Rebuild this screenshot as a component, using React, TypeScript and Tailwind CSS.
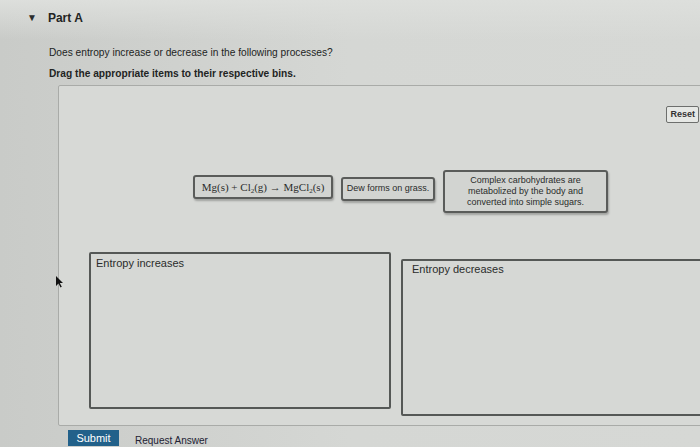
import React from "react";

// Part A — sorting exercise: drag processes into "entropy increases / decreases" bins.

type Item = { key: string; content: React.ReactNode; className: string };

const ITEMS: Item[] = [
  {
    key: "mg",
    className: "w-[140px] h-[24px] mt-[5px] font-['Liberation_Serif',serif] text-[11px]",
    content: (
      <span>
        Mg(s) + Cl<sub className="text-[7px]">2</sub>(g) → MgCl<sub className="text-[7px]">2</sub>(s)
      </span>
    ),
  },
  {
    key: "dew",
    className: "w-[94px] h-[24px] mt-[7px] text-[9px]",
    content: <span>Dew forms on grass.</span>,
  },
  {
    key: "carbs",
    className: "w-[165px] h-[43px] text-[9px] leading-[11px]",
    content: (
      <span>
        Complex carbohydrates are
        <br />
        metabolized by the body and
        <br />
        converted into simple sugars.
      </span>
    ),
  },
];

function Bin({ label, className }: { label: string; className?: string }) {
  return (
    <div
      className={
        "h-[157px] border-2 border-[#555856] bg-[#d6d8d5] rounded-[2px] px-[5px] pt-[1px] " +
        (className ?? "")
      }
    >
      <span className="block text-[11px] leading-[12px] text-[#2a2c2b]">{label}</span>
    </div>
  );
}

export default function App() {
  return (
    <div className="relative w-[700px] h-[447px] overflow-hidden bg-gradient-to-r from-[#c9cbc8] via-[#d5d7d4] to-[#d6d8d5] font-['Liberation_Sans',Arial,sans-serif] text-[#222423]">
      {/* lighter band behind the header */}
      <div className="absolute inset-x-0 top-0 h-[40px] bg-gradient-to-b from-[#dddfdc] to-transparent" />

      <div className="relative">
        <div className="flex items-center pt-[8px] pl-[27px] h-[28px]">
          <span className="text-[10px] leading-none text-[#2b2d2c]">▼</span>
          <span className="ml-[11px] text-[12px] font-bold">Part A</span>
        </div>

        <div className="pl-[49px] pt-[18px]">
          <p className="text-[10.2px] leading-[14px]">
            Does entropy increase or decrease in the following processes?
          </p>
          <p className="mt-[7px] text-[10.2px] leading-[14px] font-bold">
            Drag the appropriate items to their respective bins.
          </p>
        </div>

        <div className="ml-[58px] mt-[4px] w-[660px] h-[341px] border border-[#a9aba8] rounded-[2px] bg-[#d7d9d6]">
          <div className="flex justify-end pr-[18px] pt-[20px]">
            <button className="h-[17px] px-[3px] border border-[#6d6f6d] rounded-[2px] bg-[#e6e8e5] text-[9px] font-bold text-[#333]">
              Reset
            </button>
          </div>

          <div className="flex items-start gap-[8px] pl-[134px] mt-[47px]">
            {ITEMS.map((it) => (
              <div
                key={it.key}
                className={
                  "flex items-center justify-center text-center border-2 border-[#5a5c5a] rounded-[3px] bg-[#d2d4d1] shadow-[1px_2px_2px_rgba(0,0,0,0.25)] text-[#2a2c2b] " +
                  it.className
                }
              >
                {it.content}
              </div>
            ))}
          </div>

          <div className="flex gap-[10px] pl-[30px] mt-[39px]">
            <Bin label="Entropy increases" className="w-[302px] pt-[3px]" />
            <Bin label="Entropy decreases" className="w-[310px] mt-[7px] pl-[9px] pt-[2px]" />
          </div>
        </div>

        <div className="flex items-center ml-[68px] mt-[4px] gap-[16px]">
          <button className="w-[51px] h-[16px] bg-[#22618a] text-white text-[11px] leading-none">Submit</button>
          <span className="text-[10px] leading-none text-[#223] mt-[6px]">Request Answer</span>
        </div>
      </div>

      {/* mouse pointer */}
      <svg className="absolute left-[56px] top-[276px]" width="8" height="12" viewBox="0 0 8 12">
        <path d="M0 0 L0 10 L2.5 7.5 L4.5 11.5 L5.8 10.8 L3.8 7 L7 7 Z" fill="#111" />
      </svg>
    </div>
  );
}
